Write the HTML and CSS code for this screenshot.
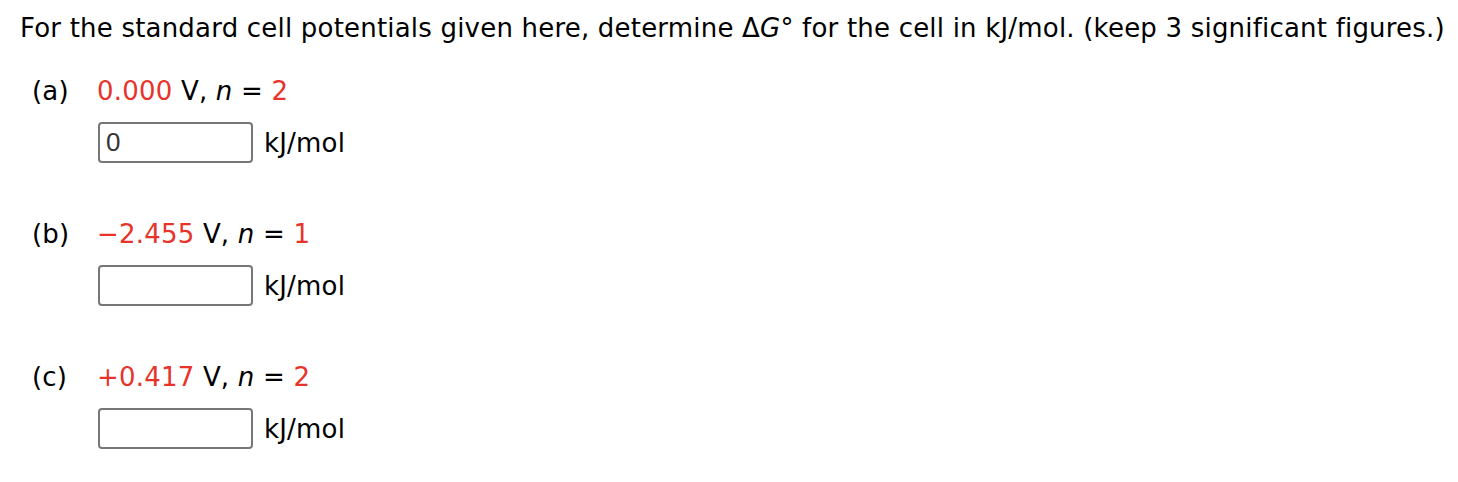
FILE: index.html
```html
<!DOCTYPE html>
<html lang="en">
<head>
  <meta charset="UTF-8">
  <title>Standard cell potentials</title>
  <link rel="stylesheet" href="styles.css">
</head>
<body>
  <div class="question">
    <p class="prompt">For the standard cell potentials given here, determine &Delta;<i>G</i>&deg; for the cell in kJ/mol. (keep 3 significant figures.)</p>

    <div class="part">
      <div class="part-head">
        <span class="part-label">(a)</span>
        <span><span class="given">0.000</span> V, <i>n</i> = <span class="given">2</span></span>
      </div>
      <div class="answer-row">
        <input class="answer" type="text" value="0">
        <span class="unit">kJ/mol</span>
      </div>
    </div>

    <div class="part">
      <div class="part-head">
        <span class="part-label">(b)</span>
        <span><span class="given">&minus;2.455</span> V, <i>n</i> = <span class="given">1</span></span>
      </div>
      <div class="answer-row">
        <input class="answer" type="text">
        <span class="unit">kJ/mol</span>
      </div>
    </div>

    <div class="part">
      <div class="part-head">
        <span class="part-label">(c)</span>
        <span><span class="given">+0.417</span> V, <i>n</i> = <span class="given">2</span></span>
      </div>
      <div class="answer-row">
        <input class="answer" type="text">
        <span class="unit">kJ/mol</span>
      </div>
    </div>
  </div>
</body>
</html>
```

FILE: styles.css
```css
body {
  margin: 0;
  background: #fff;
  color: #000;
  font-family: "DejaVu Sans", Verdana, sans-serif;
  font-size: 26px;
  letter-spacing: 0.2px;
}
.question {
  padding: 12px 0 0 20px;
}
.prompt {
  margin: 0 0 31px;
  line-height: 32px;
  white-space: nowrap;
}
.part {
  margin-bottom: 55px;
}
.part:last-child {
  margin-bottom: 0;
}
.part-head {
  display: flex;
  gap: 20px;
  padding-left: 12px;
  line-height: 32px;
}
.part-label {
  width: 45px;
}
.given {
  color: #e8332a;
}
.answer-row {
  display: flex;
  align-items: center;
  gap: 11px;
  margin-top: 15px;
  padding-left: 78px;
}
.answer {
  width: 155px;
  height: 41px;
  box-sizing: border-box;
  border: 2px solid #777;
  border-radius: 4px;
  padding: 0 6px;
  font-family: "Liberation Sans", Arial, sans-serif;
  font-size: 26px;
  letter-spacing: 0;
  color: #333;
  outline: none;
}
.unit {
  line-height: 32px;
}
```
